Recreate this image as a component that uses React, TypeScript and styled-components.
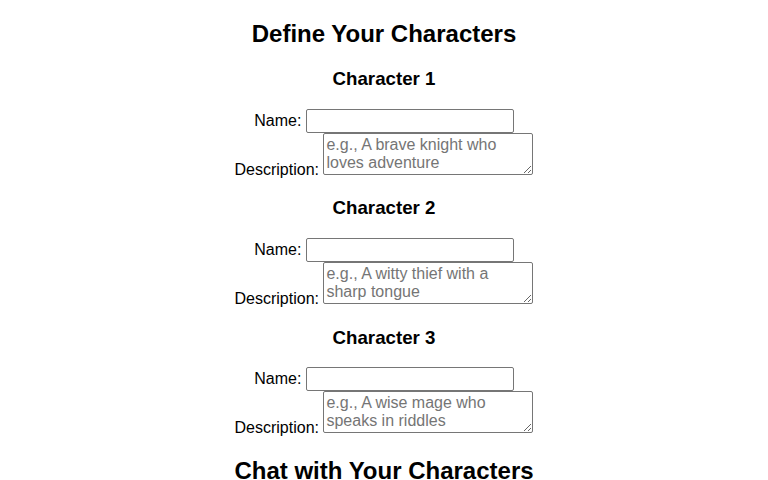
import styled, { createGlobalStyle } from "styled-components";

const characters = [
  { id: 1, hint: "e.g., A brave knight who loves adventure" },
  { id: 2, hint: "e.g., A witty thief with a sharp tongue" },
  { id: 3, hint: "e.g., A wise mage who speaks in riddles" },
];

export default function App() {
  return (
    <>
      <GlobalStyle />
      <Page>
        <Heading>Define Your Characters</Heading>
        {characters.map((c) => (
          <CharacterBlock key={c.id}>
            <SubHeading>Character {c.id}</SubHeading>
            <Field>
              <label htmlFor={`name-${c.id}`}>Name: </label>
              <NameInput id={`name-${c.id}`} type="text" />
            </Field>
            <Field>
              <label htmlFor={`desc-${c.id}`}>Description: </label>
              <DescInput id={`desc-${c.id}`} rows={2} placeholder={c.hint} />
            </Field>
          </CharacterBlock>
        ))}
        <Heading>Chat with Your Characters</Heading>
      </Page>
    </>
  );
}

const GlobalStyle = createGlobalStyle`
  body {
    margin: 0 8px;
    background: #fff;
    color: #000;
    font-family: "Liberation Sans", Arial, sans-serif;
    font-size: 16px;
  }
`;

const Page = styled.div`
  text-align: center;
`;

const Heading = styled.h2`
  font-size: 24px;
  font-weight: bold;
  margin: 19.92px 0;
`;

const CharacterBlock = styled.div``;

const SubHeading = styled.h3`
  font-size: 18.72px;
  font-weight: bold;
  margin: 18.72px 0;
`;

const Field = styled.div`
  label {
    font-size: 16px;
  }
`;

const NameInput = styled.input`
  font: inherit;
  box-sizing: border-box;
  width: 208px;
  height: 24px;
  padding: 1px 2px;
  border: 1px solid #767676;
  border-radius: 2px;
`;

const DescInput = styled.textarea`
  font: inherit;
  box-sizing: border-box;
  width: 210px;
  height: 42px;
  padding: 2px;
  border: 1px solid #767676;
  border-radius: 2px;
  resize: both;
  vertical-align: baseline;

  &::placeholder {
    color: #757575;
  }
`;
